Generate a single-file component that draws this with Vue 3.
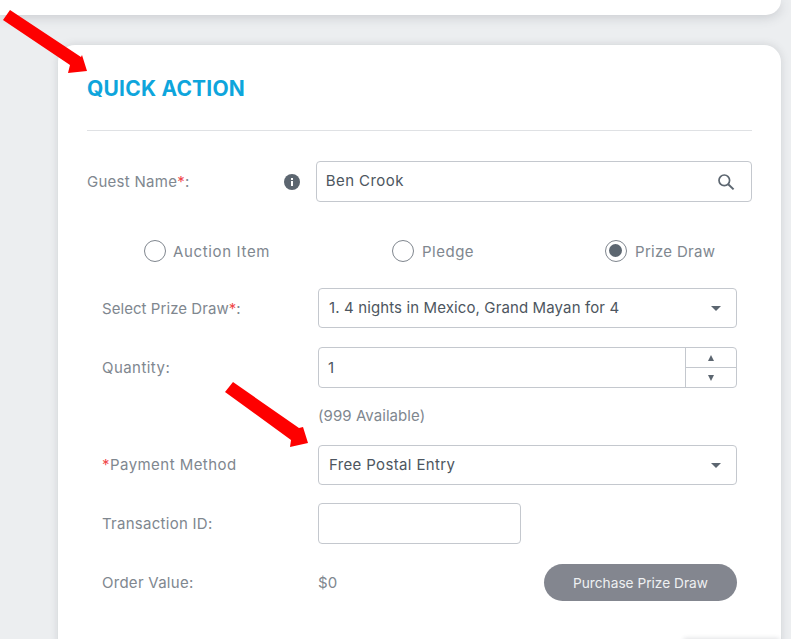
<template>
  <div class="page">
    <div class="top-card"></div>
    <section class="card">
      <h2 class="title">QUICK ACTION</h2>
      <div class="divider"></div>

      <div class="guest-row">
        <label class="label guest-label">Guest Name<span class="req">*</span>:</label>
        <svg class="info" viewBox="0 0 16 16">
          <circle cx="8" cy="8" r="8" fill="#5c6670" />
          <rect x="7" y="7" width="2" height="5" fill="#fff" />
          <rect x="7" y="4" width="2" height="2" fill="#fff" />
        </svg>
        <div class="box guest-box">
          <span class="value guest-value">Ben Crook</span>
          <svg class="search" viewBox="0 0 18 18" fill="none" stroke="#5c6670" stroke-width="1.7">
            <circle cx="7.3" cy="7.3" r="5.3" />
            <path d="M11.2 11.2 L16.6 16.4" stroke-width="2" />
          </svg>
        </div>
      </div>

      <div class="radios">
        <div v-for="r in radios" :key="r.label" class="radio-item">
          <span class="radio" :class="{ on: r.on }"></span>
          <span class="radio-label" :class="r.cls">{{ r.label }}</span>
        </div>
      </div>

      <div class="rows">
        <div class="row row-prize">
          <label class="label tight prize-label">Select Prize Draw<span class="req">*</span>:</label>
          <div class="box select">
            <span class="value">1. 4 nights in Mexico, Grand Mayan for 4</span>
            <span class="caret"></span>
          </div>
        </div>

        <div class="row row-qty">
          <label class="label wide">Quantity:</label>
          <div class="box qty">
            <span class="value">1</span>
            <div class="spin">
              <div class="spin-btn"><span class="up"></span></div>
              <div class="spin-btn second"><span class="down"></span></div>
            </div>
          </div>
        </div>

        <div class="row row-avail">
          <span></span>
          <span class="label tight">(999 Available)</span>
        </div>

        <div class="row row-pay">
          <label class="label wide"><span class="req">*</span>Payment Method</label>
          <div class="box select">
            <span class="value pay-value">Free Postal Entry</span>
            <span class="caret"></span>
          </div>
        </div>

        <div class="row row-tx">
          <label class="label">Transaction ID:</label>
          <div class="box tx"></div>
        </div>

        <div class="row row-order">
          <label class="label">Order Value:</label>
          <div class="order-right">
            <span class="label tight">$0</span>
            <button class="buy">Purchase Prize Draw</button>
          </div>
        </div>
      </div>
    </section>

    <div class="edge-shadow"></div>

    <svg class="arrows" viewBox="0 0 791 639">
      <polygon fill="#fe0000" points="3,20 10,10 81,57 82,55 87,71 68,73 70,65" />
      <polygon fill="#fe0000" points="225,392 233,382 299,428 303,427 308,443 290,447 291,440" />
    </svg>
  </div>
</template>

<script setup>
const radios = [
  { label: 'Auction Item', on: false, cls: 'r-auction' },
  { label: 'Pledge', on: false, cls: 'r-pledge' },
  { label: 'Prize Draw', on: true, cls: 'r-prize' }
]
</script>

<style>
html, body { margin: 0; background: #eceef0; }
</style>

<style scoped>
.page {
  position: relative;
  width: 791px;
  height: 639px;
  overflow: hidden;
  background: #eceef0;
  font-family: Inter, "Noto Sans", sans-serif;
  color: #4d5660;
}
.top-card {
  height: 15px;
  margin-right: 10px;
  background: #fff;
  border-radius: 0 0 15px 0;
  box-shadow: 0 2px 12px rgba(70, 75, 85, 0.22);
}
.card {
  box-sizing: border-box;
  height: 620px;
  margin: 30px 10px 0 58px;
  padding: 0 29px;
  background: #fff;
  border-radius: 17px;
  box-shadow: 0 0 8px rgba(70, 75, 85, 0.18);
}
.title {
  margin: 0;
  padding-top: 29px;
  height: 56px;
  box-sizing: border-box;
  font-size: 21px;
  line-height: 29px;
  font-weight: 700;
  letter-spacing: 0.2px;
  color: #0ea5dc;
}
.divider {
  height: 1px;
  margin-top: 29px;
  background: #dfe1e4;
}
.label {
  font-size: 15px;
  line-height: 20px;
  letter-spacing: 0.27px;
  color: #80878f;
  white-space: nowrap;
}
.label.tight { letter-spacing: 0.06px; }
.label.wide { letter-spacing: 0.45px; }
.prize-label { padding-top: 2px; }
.req { color: #f0484a; }
.value {
  font-size: 15px;
  line-height: 20px;
  letter-spacing: 0.12px;
  color: #4d5660;
  white-space: nowrap;
}
.guest-value { letter-spacing: 0.45px; margin-top: -2px; }
.pay-value { letter-spacing: 0.35px; }
.box {
  box-sizing: border-box;
  display: flex;
  align-items: center;
  background: #fff;
  border: 1px solid #c4c8ce;
  border-radius: 4px;
}
.guest-row {
  display: flex;
  align-items: center;
  margin-top: 30px;
}
.guest-label { width: 197px; }
.info { width: 16px; height: 16px; flex: none; }
.guest-box {
  width: 437px;
  height: 41px;
  margin-left: 16px;
  padding: 0 16px 0 9px;
  justify-content: space-between;
}
.search { width: 18px; height: 18px; }
.radios {
  display: grid;
  grid-template-columns: 248px 212.5px auto;
  margin: 37px 0 0 57px;
  height: 24px;
}
.radio-item { display: flex; align-items: center; gap: 7px; }
.radio {
  box-sizing: border-box;
  display: block;
  flex: none;
  width: 22px;
  height: 22px;
  padding: 3px;
  border: 1.5px solid #7f868e;
  border-radius: 50%;
}
.radio.on::after {
  content: "";
  display: block;
  width: 13px;
  height: 13px;
  border-radius: 50%;
  background: #5c6670;
}
.radio-label {
  padding-top: 1px;
  font-size: 15px;
  line-height: 20px;
  color: #80878f;
}
.r-auction { letter-spacing: 0.65px; }
.r-pledge { letter-spacing: 0.5px; margin-left: 1px; }
.r-prize { letter-spacing: 0.3px; margin-left: 1.5px; }
.rows { margin: 0 15px; }
.row {
  display: grid;
  grid-template-columns: 216px 419px;
  align-items: center;
}
.row-prize { margin-top: 25px; }
.row-qty { margin-top: 19px; }
.row-avail { margin-top: 18px; }
.row-pay { margin-top: 19px; }
.row-tx { margin-top: 18px; }
.row-order { margin-top: 20px; }
.select {
  height: 40px;
  padding: 0 15px 0 10px;
  justify-content: space-between;
}
.caret {
  width: 0;
  height: 0;
  border-left: 5px solid transparent;
  border-right: 5px solid transparent;
  border-top: 5px solid #5c6670;
}
.qty {
  height: 41px;
  padding-left: 9px;
  justify-content: space-between;
  align-items: stretch;
}
.qty .value { align-self: center; }
.spin {
  width: 50px;
  display: flex;
  flex-direction: column;
  border-left: 1px solid #c4c8ce;
}
.spin-btn {
  flex: 1;
  display: flex;
  align-items: center;
  justify-content: center;
}
.spin-btn.second { border-top: 1px solid #c4c8ce; }
.up, .down {
  width: 0;
  height: 0;
  border-left: 3.5px solid transparent;
  border-right: 3.5px solid transparent;
}
.up { border-bottom: 6px solid #5c6670; }
.down { border-top: 6px solid #5c6670; }
.tx { width: 203px; height: 41px; }
.order-right {
  display: flex;
  align-items: center;
  justify-content: space-between;
}
.buy {
  width: 193px;
  height: 37px;
  padding: 0;
  border: 0;
  border-radius: 19px;
  background: #83868f;
  color: #eef0f2;
  font-family: inherit;
  font-size: 13.7px;
}
.edge-shadow {
  position: absolute;
  left: 684px;
  right: 12px;
  top: 639px;
  height: 6px;
  box-shadow: 0 -1px 4px rgba(70, 75, 85, 0.16);
}
.arrows {
  position: absolute;
  left: 0;
  top: 0;
  width: 791px;
  height: 639px;
  pointer-events: none;
}
</style>
